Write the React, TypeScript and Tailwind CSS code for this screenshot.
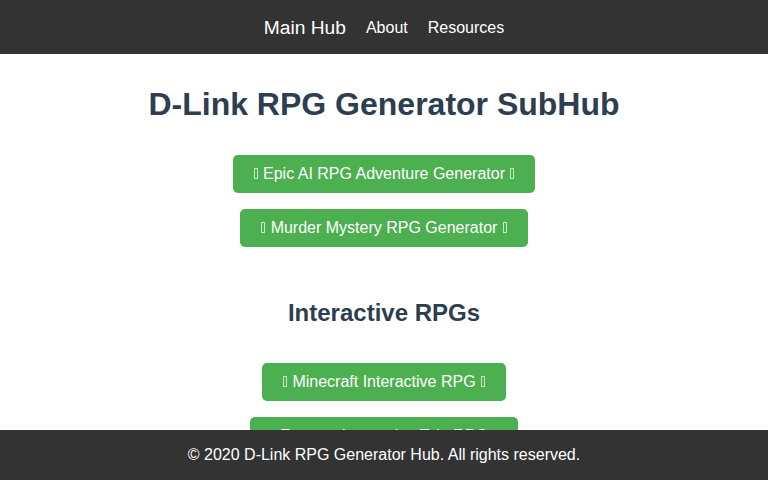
import React from 'react';

// missing-glyph box, as the browser drew it for the emoji
const Tofu: React.FC = () => (
  <span className="mx-[1px] inline-block h-[11px] w-[4px] border border-white/70 align-baseline" />
);

const GenButton: React.FC<{ label: string }> = ({ label }) => (
  <a
    href="#"
    className="inline-block rounded-[5px] bg-[#4caf50] px-5 py-[10px] text-[16px] leading-[18px] text-white no-underline"
  >
    <Tofu /> {label} <Tofu />
  </a>
);

const App: React.FC = () => {
  return (
    <div className="min-h-[480px] bg-white font-['Liberation_Sans',Arial,sans-serif] text-[#333]">
      <header className="flex h-[54px] items-center justify-center bg-[#333] pt-[2px] text-white">
        <a href="#" className="mx-[10px] text-[19.2px] leading-[22px]">Main Hub</a>
        <a href="#" className="mx-[10px] text-[16px] leading-[18px]">About</a>
        <a href="#" className="mx-[10px] text-[16px] leading-[18px]">Resources</a>
      </header>

      <main className="flex flex-col items-center pb-[70px] text-center">
        <h1 className="mt-[32px] text-[32px] font-bold leading-[37px] text-[#2c3e50]">
          D-Link RPG Generator SubHub
        </h1>

        <div className="mt-[32px] flex flex-col items-center gap-4">
          <GenButton label="Epic AI RPG Adventure Generator" />
          <GenButton label="Murder Mystery RPG Generator" />
        </div>

        <h2 className="mt-[52px] text-[24px] font-bold leading-[28px] text-[#2c3e50]">
          Interactive RPGs
        </h2>

        <div className="mt-[36px] flex flex-col items-center gap-4">
          <GenButton label="Minecraft Interactive RPG" />
          <GenButton label="Fantasy Interactive Tale RPG" />
        </div>
      </main>

      <footer className="fixed bottom-0 left-0 right-0 flex h-[50px] items-center justify-center bg-[#333] text-[16px] text-white">
        © 2020 D-Link RPG Generator Hub. All rights reserved.
      </footer>
    </div>
  );
};

export default App;
